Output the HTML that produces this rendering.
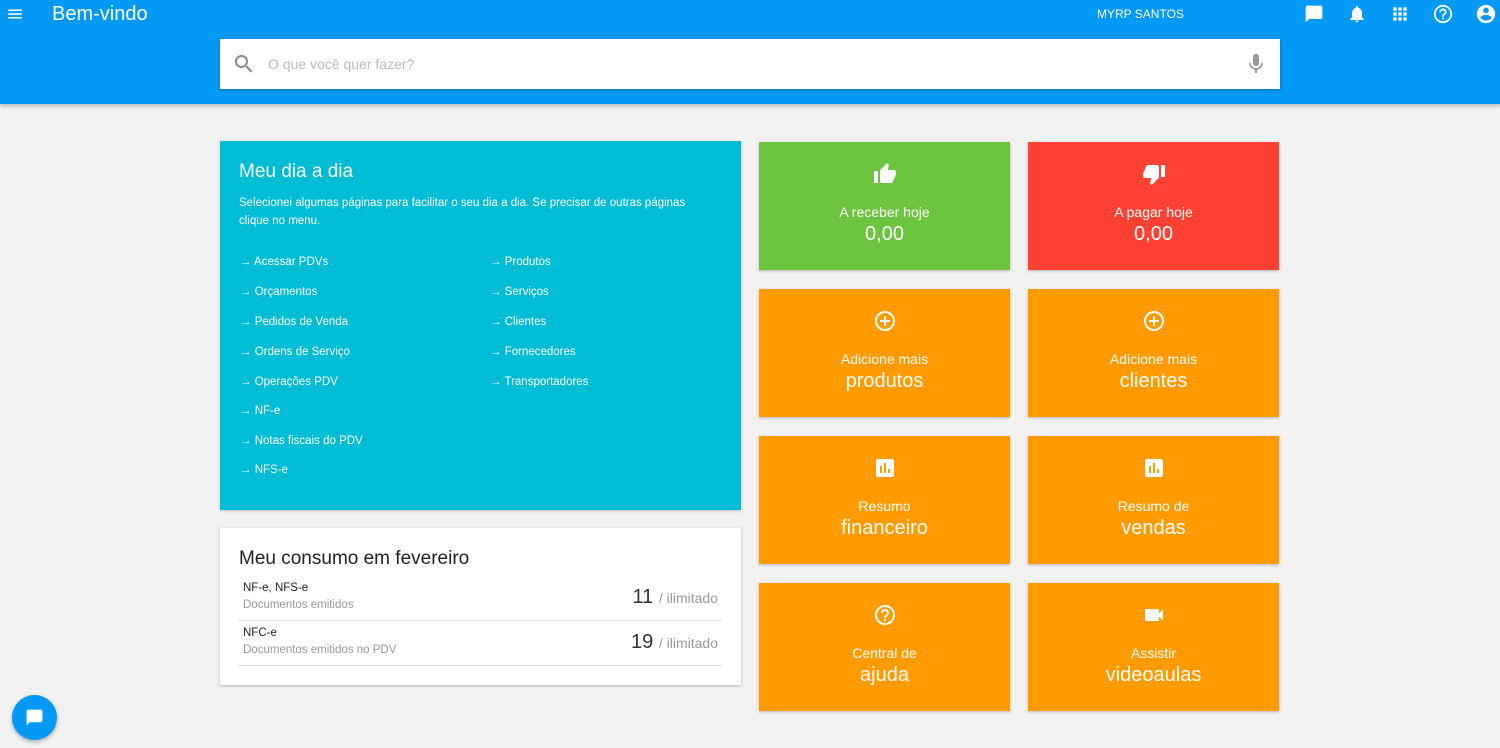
<!DOCTYPE html>
<html><head><meta charset="utf-8"><style>
*{box-sizing:border-box;margin:0;padding:0}
body{width:1500px;height:748px;overflow:hidden;background:#f2f2f2;font-family:"Liberation Sans",sans-serif;position:relative}
.hdr{position:absolute;left:0;top:0;width:1500px;height:104px;background:#0399f4;box-shadow:0 2px 4px rgba(0,0,0,.25)}
.title{position:absolute;left:52px;top:3px;font-size:20px;color:#fff}
.user{position:absolute;left:1097px;top:7px;font-size:12px;color:#fff}
.search{position:absolute;left:220px;top:39px;width:1060px;height:50px;background:#fff;box-shadow:0 1px 3px rgba(0,0,0,.3)}
.search span{position:absolute;left:48px;top:17px;font-size:14px;color:#bbb}
.ic{position:absolute}
.dia{position:absolute;left:220px;top:141px;width:521px;height:369px;background:#00bcd4;color:#fff;box-shadow:0 1px 3px rgba(0,0,0,.2)}
.dia h2{position:absolute;left:19px;top:20px;font-size:19px;font-weight:normal}
.dia p{position:absolute;left:19px;top:53px;width:468px;font-size:11.5px;line-height:18px}
.lk{position:absolute;font-size:11.5px}
.cons{position:absolute;left:220px;top:528px;width:521px;height:157px;background:#fff;box-shadow:0 1px 3px rgba(0,0,0,.25)}
.cons h2{position:absolute;left:19px;top:20px;font-size:19px;font-weight:normal;color:#222}
.row{position:absolute;left:18px;width:484px;height:45px;border-bottom:1px solid #ddd}
.row .a{position:absolute;left:5px;top:6px;font-size:11.5px;color:#222}
.row .b{position:absolute;left:5px;top:23px;font-size:11.5px;color:#999}
.row .c{position:absolute;right:4px;top:10px;font-size:20px;color:#333}
.row .c small{font-size:14px;color:#999}
.t{position:absolute;width:251px;height:128px;color:#fff;text-align:center;box-shadow:0 1px 3px rgba(0,0,0,.25)}
.t .l1{position:absolute;left:0;right:0;top:62px;font-size:14px}
.t .l2{position:absolute;left:0;right:0;top:81px;font-size:20px}
.t svg{position:absolute;left:114px;top:20px}
.o{background:#ff9a00}
.fab{position:absolute;left:12px;top:695px;width:45px;height:45px;border-radius:50%;background:#0399f4;box-shadow:0 2px 4px rgba(0,0,0,.3)}
</style></head><body>
<div class="hdr">
<svg class="ic" style="left:6px;top:5px" width="18" height="18" viewBox="0 0 24 24"><path fill="#fff" d="M3 6h18v2H3zm0 5h18v2H3zm0 5h18v2H3z"/></svg>
<div class="title">Bem-vindo</div>
<div class="user">MYRP SANTOS</div>
<svg class="ic" style="left:1304px;top:4px" width="20" height="20" viewBox="0 0 24 24"><path fill="#fff" d="M20 2H4c-1.1 0-2 .9-2 2v18l4-4h14c1.1 0 2-.9 2-2V4c0-1.1-.9-2-2-2z"/></svg>
<svg class="ic" style="left:1347px;top:4px" width="20" height="20" viewBox="0 0 24 24"><path fill="#fff" d="M12 22c1.1 0 2-.9 2-2h-4c0 1.1.9 2 2 2zm6-6v-5c0-3.1-1.6-5.6-4.5-6.3V4c0-.8-.7-1.5-1.5-1.5s-1.5.7-1.5 1.5v.7C7.6 5.4 6 7.9 6 11v5l-2 2v1h16v-1z"/></svg>
<svg class="ic" style="left:1390px;top:4px" width="20" height="20" viewBox="0 0 24 24"><path fill="#fff" d="M4 8h4V4H4zm6 12h4v-4h-4zm-6 0h4v-4H4zm0-6h4v-4H4zm6 0h4v-4h-4zm6-10v4h4V4zm-6 4h4V4h-4zm6 6h4v-4h-4zm0 6h4v-4h-4z"/></svg>
<svg class="ic" style="left:1432px;top:3px" width="22" height="22" viewBox="0 0 24 24"><path fill="#fff" d="M11 18h2v-2h-2zm1-16C6.5 2 2 6.5 2 12s4.5 10 10 10 10-4.5 10-10S17.5 2 12 2zm0 18c-4.4 0-8-3.600-8-8s3.6-8 8-8 8 3.6 8 8-3.6 8-8 8zm0-14c-2.2 0-4 1.8-4 4h2c0-1.1.9-2 2-2s2 .9 2 2c0 2-3 1.8-3 5h2c0-2.3 3-2.5 3-5 0-2.2-1.8-4-4-4z"/></svg>
<svg class="ic" style="left:1475px;top:3px" width="22" height="22" viewBox="0 0 24 24"><path fill="#fff" d="M12 2C6.5 2 2 6.5 2 12s4.5 10 10 10 10-4.5 10-10S17.5 2 12 2zm0 3c1.7 0 3 1.3 3 3s-1.3 3-3 3-3-1.3-3-3 1.3-3 3-3zm0 14.2c-2.5 0-4.7-1.3-6-3.2 0-2 4-3.1 6-3.1s6 1.1 6 3.1c-1.3 1.9-3.5 3.2-6 3.2z"/></svg>
<div class="search">
<svg class="ic" style="left:12px;top:13px" width="24" height="24" viewBox="0 0 24 24"><path fill="#888" d="M15.5 14h-.8l-.3-.3c1-1.1 1.6-2.6 1.6-4.2C16 5.9 13.1 3 9.5 3S3 5.9 3 9.5 5.9 16 9.5 16c1.6 0 3.1-.6 4.2-1.6l.3.3v.8l5 5 1.5-1.5zm-6 0C7 14 5 12 5 9.5S7 5 9.5 5 14 7 14 9.5 12 14 9.5 14z"/></svg>
<span>O que você quer fazer?</span>
<svg class="ic" style="left:1024px;top:13px" width="24" height="24" viewBox="0 0 24 24"><path fill="#999" d="M12 14c1.7 0 3-1.3 3-3V5c0-1.7-1.3-3-3-3S9 3.3 9 5v6c0 1.7 1.3 3 3 3zm5.3-3c0 3-2.5 5.1-5.3 5.1S6.7 14 6.7 11H5c0 3.4 2.7 6.2 6 6.7V21h2v-3.3c3.3-.5 6-3.300 6-6.700z"/></svg>
</div>
</div>

<div class="dia">
<h2>Meu dia a dia</h2>
<p>Selecionei algumas páginas para facilitar o seu dia a dia. Se precisar de outras páginas clique no menu.</p>
<div class="lk" style="left:20px;top:115px">→ Acessar PDVs</div>
<div class="lk" style="left:20px;top:145px">→ Orçamentos</div>
<div class="lk" style="left:20px;top:175px">→ Pedidos de Venda</div>
<div class="lk" style="left:20px;top:205px">→ Ordens de Serviço</div>
<div class="lk" style="left:20px;top:235px">→ Operações PDV</div>
<div class="lk" style="left:20px;top:264px">→ NF-e</div>
<div class="lk" style="left:20px;top:294px">→ Notas fiscais do PDV</div>
<div class="lk" style="left:20px;top:323px">→ NFS-e</div>
<div class="lk" style="left:270px;top:115px">→ Produtos</div>
<div class="lk" style="left:270px;top:145px">→ Serviços</div>
<div class="lk" style="left:270px;top:175px">→ Clientes</div>
<div class="lk" style="left:270px;top:205px">→ Fornecedores</div>
<div class="lk" style="left:270px;top:235px">→ Transportadores</div>
</div>

<div class="cons">
<h2>Meu consumo em fevereiro</h2>
<div class="row" style="top:48px"><div class="a">NF-e, NFS-e</div><div class="b">Documentos emitidos</div><div class="c">11 <small>/ ilimitado</small></div></div>
<div class="row" style="top:93px"><div class="a">NFC-e</div><div class="b">Documentos emitidos no PDV</div><div class="c">19 <small>/ ilimitado</small></div></div>
</div>

<div class="t" style="left:759px;top:142px;background:#6cc43f"><svg width="24" height="24" viewBox="0 0 24 24"><path fill="#fff" d="M1 21h4V9H1zm22-11c0-1.1-.9-2-2-2h-6.3l1-4.6v-.3c0-.4-.2-.8-.4-1.1L14.2 1 7.6 7.6C7.2 7.9 7 8.4 7 9v10c0 1.1.9 2 2 2h9c.8 0 1.5-.5 1.8-1.2l3-7.1c.1-.2.2-.5.2-.7z"/></svg><div class="l1">A receber hoje</div><div class="l2">0,00</div></div>
<div class="t" style="left:1028px;top:142px;background:#ff4133"><svg width="24" height="24" viewBox="0 0 24 24"><path fill="#fff" d="M15 3H6c-.8 0-1.5.5-1.8 1.2l-3 7.1c-.1.2-.2.5-.2.7v2c0 1.1.9 2 2 2h6.3l-1 4.6v.3c0 .4.2.8.4 1.1l1.1 1 6.6-6.6c.4-.4.6-.9.6-1.4V5c0-1.1-.9-2-2-2zm4 0v12h4V3z"/></svg><div class="l1">A pagar hoje</div><div class="l2">0,00</div></div>

<div class="t o" style="left:759px;top:289px"><svg width="24" height="24" viewBox="0 0 24 24"><path fill="#fff" d="M13 7h-2v4H7v2h4v4h2v-4h4v-2h-4zm-1-5C6.5 2 2 6.5 2 12s4.5 10 10 10 10-4.5 10-10S17.5 2 12 2zm0 18c-4.4 0-8-3.6-8-8s3.6-8 8-8 8 3.6 8 8-3.6 8-8 8z"/></svg><div class="l1">Adicione mais</div><div class="l2">produtos</div></div>
<div class="t o" style="left:1028px;top:289px"><svg width="24" height="24" viewBox="0 0 24 24"><path fill="#fff" d="M13 7h-2v4H7v2h4v4h2v-4h4v-2h-4zm-1-5C6.5 2 2 6.5 2 12s4.5 10 10 10 10-4.5 10-10S17.5 2 12 2zm0 18c-4.4 0-8-3.6-8-8s3.6-8 8-8 8 3.6 8 8-3.6 8-8 8z"/></svg><div class="l1">Adicione mais</div><div class="l2">clientes</div></div>

<div class="t o" style="left:759px;top:436px"><svg width="24" height="24" viewBox="0 0 24 24"><path fill="#fff" d="M19 3H5c-1.1 0-2 .9-2 2v14c0 1.1.9 2 2 2h14c1.1 0 2-.9 2-2V5c0-1.1-.9-2-2-2zM9 17H7v-7h2zm4 0h-2V7h2zm4 0h-2v-4h2z"/></svg><div class="l1">Resumo</div><div class="l2">financeiro</div></div>
<div class="t o" style="left:1028px;top:436px"><svg width="24" height="24" viewBox="0 0 24 24"><path fill="#fff" d="M19 3H5c-1.1 0-2 .9-2 2v14c0 1.1.9 2 2 2h14c1.1 0 2-.9 2-2V5c0-1.1-.9-2-2-2zM9 17H7v-7h2zm4 0h-2V7h2zm4 0h-2v-4h2z"/></svg><div class="l1">Resumo de</div><div class="l2">vendas</div></div>

<div class="t o" style="left:759px;top:583px"><svg width="24" height="24" viewBox="0 0 24 24"><path fill="#fff" d="M11 18h2v-2h-2zm1-16C6.5 2 2 6.5 2 12s4.5 10 10 10 10-4.5 10-10S17.5 2 12 2zm0 18c-4.4 0-8-3.6-8-8s3.6-8 8-8 8 3.6 8 8-3.6 8-8 8zm0-14c-2.2 0-4 1.8-4 4h2c0-1.1.9-2 2-2s2 .9 2 2c0 2-3 1.8-3 5h2c0-2.3 3-2.5 3-5 0-2.2-1.8-4-4-4z"/></svg><div class="l1">Central de</div><div class="l2">ajuda</div></div>
<div class="t o" style="left:1028px;top:583px"><svg width="24" height="24" viewBox="0 0 24 24"><path fill="#fff" d="M17 10.5V7c0-.6-.4-1-1-1H4c-.6 0-1 .4-1 1v10c0 .6.4 1 1 1h12c.6 0 1-.4 1-1v-3.5l4 4v-11z"/></svg><div class="l1">Assistir</div><div class="l2">videoaulas</div></div>

<div class="fab"><svg style="position:absolute;left:13px;top:13px" width="19" height="19" viewBox="0 0 24 24"><path fill="#fff" d="M20 2H4c-1.1 0-2 .9-2 2v18l4-4h14c1.1 0 2-.9 2-2V4c0-1.1-.9-2-2-2z"/></svg></div>
</body></html>
